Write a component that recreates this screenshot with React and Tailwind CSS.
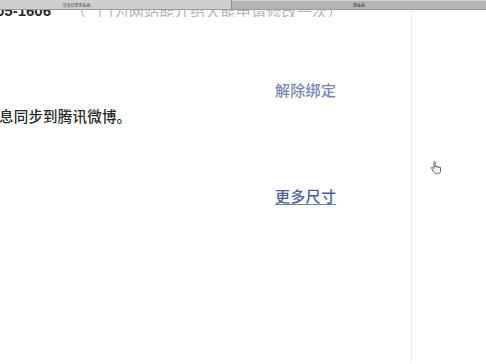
export default function App() {
  const cjk = { fontFamily: '"Noto Sans CJK SC", "Noto Sans", sans-serif' };
  return (
    <div className="relative w-[486px] h-[364px] bg-white overflow-hidden" style={cjk}>
      {/* top bar */}
      <div className="flex h-[10px] border-b border-[#9a9a9a]">
        <div className="w-[231px] bg-[#cfcfcf] flex items-center justify-center">
          <span className="text-[4px] leading-none text-[#555] ml-[-78px]">渲染结果查看器</span>
        </div>
        <div className="flex-1 bg-[#b4b4b4] border-l border-[#8c8c8c] border-t border-t-[#d0d0d0] flex items-center justify-center">
          <span className="text-[4px] leading-none text-[#444]">查看器</span>
        </div>
      </div>
      <div className="flex h-[353px]">
        <div className="w-[412px] border-r border-[#eceef3] flex flex-col">
          {/* clipped row */}
          <div className="h-[7px] overflow-hidden flex items-end">
            <div className="flex items-end whitespace-nowrap ml-[-4px] text-[15px] leading-[15px] mb-[-1px]">
              <span className="font-bold text-[#2a2a2a]" style={{ fontFamily: '"Liberation Sans", sans-serif' }}>05-1606</span>
              <span className="text-[#b5b5b5] ml-[20px]">（</span>
              <span className="text-[#b5b5b5] ml-[12px] tracking-[0.3px]">门为网站能介绍大能申请修改一次）</span>
            </div>
          </div>
          <div className="mt-[64px] pl-[275px] text-[15px] leading-[18px] text-[#7887b6] font-medium tracking-[0.3px]">解除绑定</div>
          <div className="mt-[8px] ml-[-1px] text-[14.5px] leading-[18px] text-[#2a2a2a] font-medium whitespace-nowrap tracking-[0.2px]">息同步到腾讯微博。</div>
          <div className="mt-[62px] pl-[275px] text-[15px] leading-[18px] text-[#4a5e9f] font-medium tracking-[0.3px]">
            <span className="underline underline-offset-2 decoration-[#6f80b5]">更多尺寸</span>
          </div>
        </div>
        <div className="flex-1" />
      </div>
      {/* mouse cursor */}
      <svg className="absolute left-[430px] top-[161px]" width="12" height="14" viewBox="0 0 12 14">
        <path d="M4 1.5v6l-1.3-1.2c-.6-.5-1.5 0-1.1.8l2.4 4.2c.5.9 1.3 1.4 2.3 1.4h1.6c1.5 0 2.6-1.2 2.6-2.6V6.8c0-.5-.4-.9-.9-.9s-.9.4-.9.9v-.4c0-.5-.4-.9-.9-.9s-.9.4-.9.9V5.8c0-.5-.4-.9-.9-.9s-.9.4-.9.9V1.5C5.8 1 5.4.6 4.9.6S4 1 4 1.5z" fill="#f4f4f4" stroke="#6a6a6a" strokeWidth="1"/>
      </svg>
    </div>
  );
}
